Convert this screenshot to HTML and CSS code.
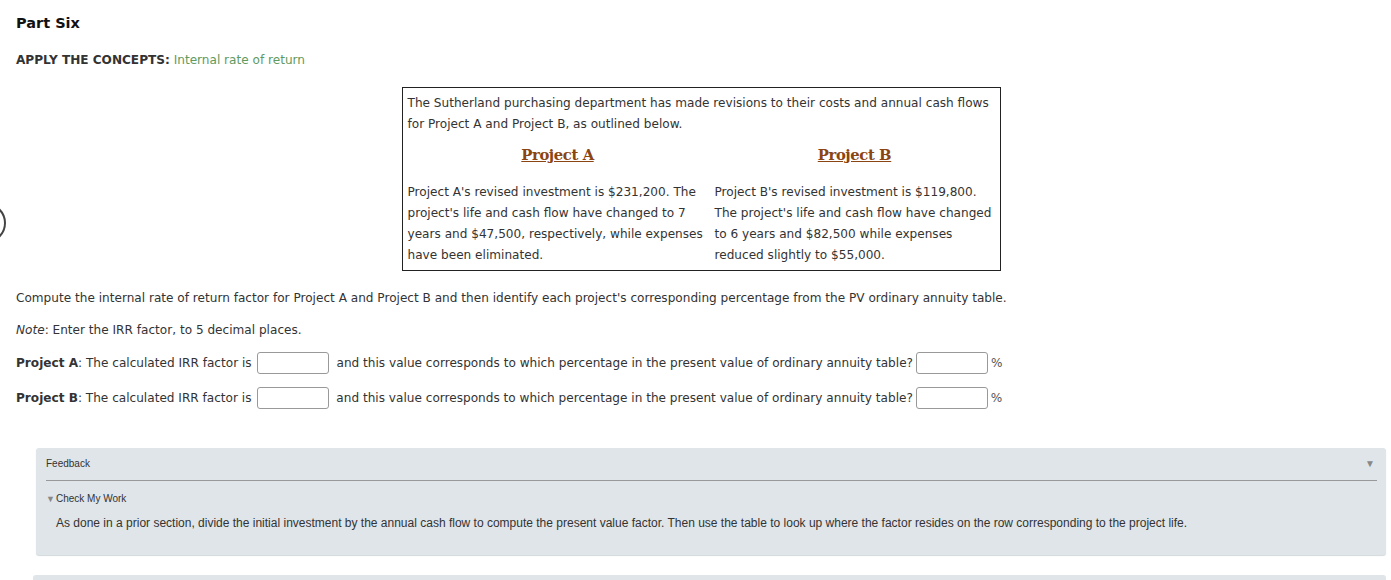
FILE: index.html
```html
<!DOCTYPE html>
<html>
<head>
<meta charset="utf-8">
<link rel="stylesheet" href="styles.css">
</head>
<body>
<div class="nav-circle"></div>
<div class="page">
  <h2 class="part">Part Six</h2>
  <p class="concept"><b>APPLY THE CONCEPTS:</b> <span class="green">Internal rate of return</span></p>
  <div class="box">
    <p class="intro">The Sutherland purchasing department has made revisions to their costs and annual cash flows for Project A and Project B, as outlined below.</p>
    <div class="cols">
      <div class="col">
        <h3 class="proj">Project A</h3>
        <p>Project A's revised investment is $231,200. The project's life and cash flow have changed to 7 years and $47,500, respectively, while expenses have been eliminated.</p>
      </div>
      <div class="col">
        <h3 class="proj">Project B</h3>
        <p>Project B's revised investment is $119,800. The project's life and cash flow have changed to 6 years and $82,500 while expenses reduced slightly to $55,000.</p>
      </div>
    </div>
  </div>
  <p class="text q1">Compute the internal rate of return factor for Project A and Project B and then identify each project's corresponding percentage from the PV ordinary annuity table.</p>
  <p class="text"><i>Note</i>: Enter the IRR factor, to 5 decimal places.</p>
  <div class="row"><b>Project A</b>: The calculated IRR factor is <input class="inp" type="text"> <span class="gap">and this value corresponds to which percentage in the present value of ordinary annuity table?</span><input class="inp" type="text"> <span class="pct">%</span></div>
  <div class="row"><b>Project B</b>: The calculated IRR factor is <input class="inp" type="text"> <span class="gap">and this value corresponds to which percentage in the present value of ordinary annuity table?</span><input class="inp" type="text"> <span class="pct">%</span></div>
  <div class="feedback">
    <div class="fb-head"><span>Feedback</span><span class="tri">&#9660;</span></div>
    <div class="fb-sub"><span class="tri-s">&#9660;</span>Check My Work</div>
    <p class="fb-text">As done in a prior section, divide the initial investment by the annual cash flow to compute the present value factor. Then use the table to look up where the factor resides on the row corresponding to the project life.</p>
  </div>
  <div class="feedback2"></div>
</div>
</body>
</html>
```
FILE: styles.css
```css
html, body { margin: 0; padding: 0; background: #fff; overflow: hidden; }
body { font-family: "DejaVu Sans", Verdana, sans-serif; font-size: 12.1px; color: #333; }
.page { padding: 14px 5px 0 16px; }
.nav-circle { position: absolute; left: -34px; top: 203px; width: 36px; height: 36px; border: 2px solid #444; border-radius: 50%; }
.part { font-size: 14.5px; font-weight: bold; color: #111; margin: 0; line-height: 18px; }
.concept { margin: 20px 0 0; line-height: 16px; color: #333; }
.concept b { color: #333; }
.green { color: #5f9a5f; }
.box { width: 587px; margin: 19px auto 0; border: 1px solid #222; padding: 5px 5px 4px 5px; line-height: 21px; }
.intro { margin: 0; }
.cols { display: grid; grid-template-columns: 300px 1fr; column-gap: 7px; }
.col p { margin: 0; }
.col:first-child p { width: 307px; }
.proj { font-family: "DejaVu Serif", Georgia, serif; font-weight: bold; font-size: 14.8px; color: #8b4513; text-decoration: underline; text-align: center; margin: 8px 0 15px; line-height: 24px; letter-spacing: -0.4px; }
.text { margin: 0; line-height: 21px; }
.q1 { margin-top: 17px; }
.text + .text { margin-top: 11px; }
.row { display: flex; align-items: center; height: 24px; margin-top: 10px; white-space: pre; }
.row + .row { margin-top: 11px; }
.row b { font-weight: bold; }
.inp { width: 66px; height: 18px; border: 1px solid #999; border-radius: 3px; padding: 1px 2px; margin: 0 0 0 2px; font: inherit; }
.gap { margin-left: 7px; margin-right: 1px; }
.pct { margin-left: 3px; color: #555; }
.feedback { margin: 38px 0 0 20px; background: #dfe5e9; border-radius: 3px; padding: 0 9px 0 10px; height: 107px; font-family: "Liberation Sans", Arial, sans-serif; color: #333; box-shadow: 0 1px 1px #d3d9dc; }
.fb-head { display: flex; justify-content: space-between; font-size: 10px; padding-top: 10px; height: 22px; border-bottom: 1px solid #999; }
.tri { color: #888; font-size: 10px; margin-right: 2px; }
.fb-sub { font-size: 10px; margin-top: 12px; }
.tri-s { color: #888; font-size: 9px; margin-right: 1px; }
.fb-text { font-size: 12px; margin: 12px 0 0 10px; }
.feedback2 { margin: 20px 0 0 17px; background: #dfe5e9; height: 20px; border-radius: 3px; }
```
